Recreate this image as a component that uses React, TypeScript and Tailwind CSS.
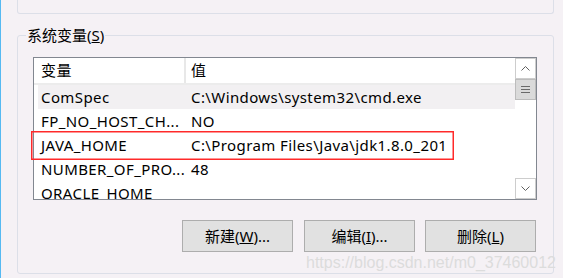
import React from "react";

const rows = [
	{ name: "ComSpec", value: "C:\\Windows\\system32\\cmd.exe", hover: true },
	{ name: "FP_NO_HOST_CH...", value: "NO" },
	{ name: "JAVA_HOME", value: "C:\\Program Files\\Java\\jdk1.8.0_201" },
	{ name: "NUMBER_OF_PRO...", value: "48" },
	{ name: "ORACLE_HOME", value: "" },
];

function Chevron({ up }: { up?: boolean }) {
	return (
		<svg width="9" height="5" viewBox="0 0 9 5" className="text-[#606060]">
			<polyline
				points={up ? "0.5,4.5 4.5,0.5 8.5,4.5" : "0.5,0.5 4.5,4.5 8.5,0.5"}
				fill="none"
				stroke="currentColor"
				strokeWidth="1"
			/>
		</svg>
	);
}

function DialogButton({ children, className = "" }: { children: React.ReactNode; className?: string }) {
	return (
		<div className={`w-[111px] h-[32px] border border-[#adadad] bg-[#e1e1e1] flex items-center justify-center ${className}`}>
			{children}
		</div>
	);
}

export default function App() {
	return (
		<div className="relative flex w-[563px] h-[278px] overflow-hidden bg-[#f5f1f5] font-['Noto_Sans','Noto_Sans_CJK_SC',sans-serif] text-[15px] text-black">
			<div className="w-px bg-[#55b9f2]" />
			<div className="flex-1 pl-[16px] pr-[9px]">
				<div className="h-[14px] border-x border-b border-[#dcdfe8] rounded-b-[3px]" />
				<fieldset className="mt-[11px] h-[249px] border border-[#dcdfe8] rounded-[3px]">
					<legend className="ml-[8px] px-px leading-[20px]">
						系统变量(<span className="underline">S</span>)
					</legend>
					<div className="pl-[15px] pr-[16px]">
						{/* list view */}
						<div className="mt-[12px] h-[143px] border border-[#828790] bg-white flex overflow-hidden tracking-[0.4px]">
							<div className="flex-1 flex flex-col overflow-hidden">
								<div className="h-[27px] shrink-0 flex border-b-2 border-[#ececec]">
									<div className="w-[150px] pl-[7px] flex items-center">变量</div>
									<div className="w-[2px] bg-[#e8e8e8]" />
									<div className="flex-1 pl-[5px] flex items-center">值</div>
								</div>
								{rows.map(r => (
									<div
										key={r.name}
										className={`ml-[4px] h-[24px] shrink-0 flex items-center pl-[3px] ${r.hover ? 'bg-[#f2f0f2]' : ''}`}
									>
										<span className="w-[150px] whitespace-nowrap">{r.name}</span>
										<span className="whitespace-nowrap">{r.value}</span>
									</div>
								))}
							</div>
							{/* scrollbar */}
							<div className="w-[21px] flex flex-col">
								<div className="h-[21px] border border-[#cdcdcd] flex items-center justify-center">
									<Chevron up />
								</div>
								<div className="h-[21px] border border-[#bcbcbc] bg-[#dadada] flex flex-col items-center justify-center gap-[2px]">
									<div className="w-[9px] h-px bg-[#6a6a6a]" />
									<div className="w-[9px] h-px bg-[#6a6a6a]" />
									<div className="w-[9px] h-px bg-[#6a6a6a]" />
								</div>
								<div className="flex-1" />
								<div className="h-[21px] border border-[#cdcdcd] flex items-center justify-center">
									<Chevron />
								</div>
							</div>
						</div>
						<div className="mt-[20px] mr-px flex justify-end">
							<DialogButton className="mr-[11px]">新建(<span className="underline">W</span>)...</DialogButton>
							<DialogButton className="mr-[10px]">编辑(<span className="underline">I</span>)...</DialogButton>
							<DialogButton>删除(<span className="underline">L</span>)</DialogButton>
						</div>
					</div>
				</fieldset>
			</div>
			{/* annotation box */}
			<div className="absolute left-[31px] top-[131px] w-[423px] h-[29px] shadow-[inset_0_0_0_1.5px_#ff2a2a]" />
			{/* watermark */}
			<div className="absolute left-[306px] top-[251px] font-['Liberation_Sans',sans-serif] text-[16px] text-[#dcdcdc] whitespace-nowrap">
				https://blog.csdn.net/m0_37460012
			</div>
		</div>
	);
}
